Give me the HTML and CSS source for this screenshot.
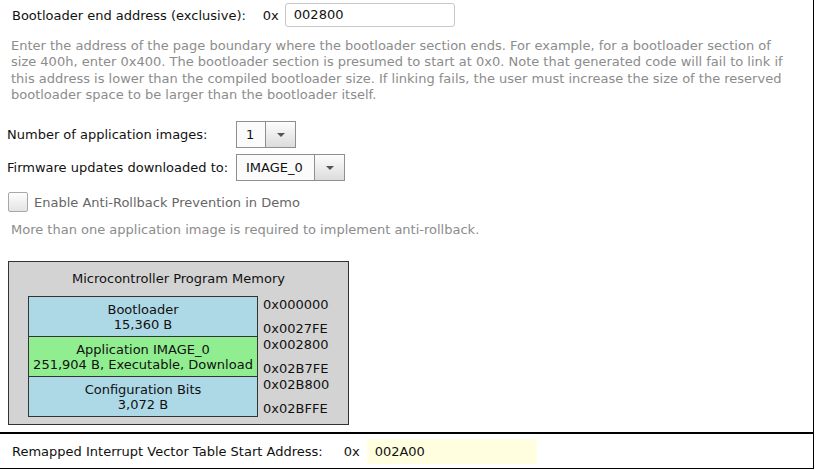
FILE: index.html
```html
<!DOCTYPE html>
<html>
<head>
<meta charset="utf-8">
<link rel="stylesheet" href="styles.css">
</head>
<body>
<div class="frame">
  <div class="main">
    <div class="row-top">
      <span class="lbl">Bootloader end address (exclusive):</span>
      <span class="hex">0x</span>
      <div class="input">002800</div>
    </div>
    <p class="desc">Enter the address of the page boundary where the bootloader section ends. For example, for a bootloader section of<br>size 400h, enter 0x400. The bootloader section is presumed to start at 0x0. Note that generated code will fail to link if<br>this address is lower than the compiled bootloader size. If linking fails, the user must increase the size of the reserved<br>bootloader space to be larger than the bootloader itself.</p>
    <div class="grid">
      <span class="lbl">Number of application images:</span>
      <div class="combo"><span class="ctext w1">1</span><span class="carrow"><i class="tri"></i></span></div>
      <span class="lbl">Firmware updates downloaded to:</span>
      <div class="combo"><span class="ctext w2">IMAGE_0</span><span class="carrow"><i class="tri"></i></span></div>
    </div>
    <div class="check"><span class="box"></span><span class="check-lbl">Enable Anti-Rollback Prevention in Demo</span></div>
    <p class="note">More than one application image is required to implement anti-rollback.</p>
    <div class="mem">
      <div class="mem-title">Microcontroller Program Memory</div>
      <div class="mem-row">
        <div class="seg blue">Bootloader<br>15,360 B</div>
        <div class="addr"><span>0x000000</span><span>0x0027FE</span></div>
      </div>
      <div class="mem-row">
        <div class="seg green">Application IMAGE_0<br>251,904 B, Executable, Download</div>
        <div class="addr"><span>0x002800</span><span>0x02B7FE</span></div>
      </div>
      <div class="mem-row">
        <div class="seg blue">Configuration Bits<br>3,072 B</div>
        <div class="addr"><span>0x02B800</span><span>0x02BFFE</span></div>
      </div>
    </div>
  </div>
  <div class="bottom">
    <span class="lbl">Remapped Interrupt Vector Table Start Address:</span>
    <span class="hex2">0x</span>
    <div class="yfield">002A00</div>
  </div>
</div>
</body>
</html>
```

FILE: styles.css
```css
body {
  margin: 0;
  font-family: "DejaVu Sans", sans-serif;
  font-size: 13px;
  color: #111;
  background: #fff;
}

.frame {
  width: 813px;
  border-right: 1px solid #000;
}

.main {
  height: 432px;
  box-sizing: border-box;
  padding-top: 3px;
  display: flex;
  flex-direction: column;
  align-items: flex-start;
}

.row-top {
  display: flex;
  align-items: center;
  height: 24px;
  padding-left: 12px;
  white-space: nowrap;
}

.hex {
  margin-left: 17px;
}

.input {
  margin-left: 6px;
  width: 170px;
  height: 24px;
  box-sizing: border-box;
  border: 1px solid #c8c8c8;
  border-radius: 3px;
  padding-left: 8px;
  line-height: 22px;
  background: #fff;
}

.desc {
  margin: 11px 0 0 11px;
  line-height: 16.33px;
  color: #8c8c8c;
  white-space: nowrap;
}

.grid {
  display: grid;
  grid-template-columns: 229px auto;
  row-gap: 6px;
  margin: 18px 0 0 7px;
  align-items: center;
  white-space: nowrap;
}

.combo {
  display: flex;
  height: 27px;
  box-sizing: border-box;
  border: 1px solid #8f8f8f;
  justify-self: start;
}

.ctext {
  box-sizing: border-box;
  background: #fbfbfb;
  padding-left: 9px;
  line-height: 25px;
  border-right: 1px solid #8f8f8f;
}

.w1 { width: 29px; }
.w2 { width: 78px; }

.carrow {
  width: 29px;
  background: linear-gradient(#fdfdfd, #dcdcdc);
  display: flex;
  align-items: center;
  justify-content: center;
}

.tri {
  width: 0;
  height: 0;
  border-left: 4px solid transparent;
  border-right: 4px solid transparent;
  border-top: 4px solid #555;
}

.check {
  display: flex;
  align-items: center;
  margin: 11px 0 0 8px;
}

.box {
  width: 20px;
  height: 20px;
  box-sizing: border-box;
  border: 1px solid #a8a8a8;
  border-radius: 2px;
  background: linear-gradient(#fdfdfd, #e4e4e4);
}

.check-lbl {
  margin-left: 6px;
  color: #666;
}

.note {
  margin: 10px 0 0 11px;
  line-height: 16px;
  color: #8c8c8c;
  white-space: nowrap;
}

.mem {
  margin: 23px 0 0 8px;
  width: 341px;
  box-sizing: border-box;
  border: 1px solid #333;
  background: #d3d3d3;
  padding: 8px 0 7px 19px;
}

.mem-title {
  width: 339px;
  margin-left: -19px;
  text-align: center;
  line-height: 17px;
  margin-bottom: 9px;
  white-space: nowrap;
}

.mem-row {
  display: flex;
  height: 41px;
}

.mem-row + .mem-row {
  margin-top: -1px;
}

.seg {
  width: 230px;
  box-sizing: border-box;
  border: 1px solid #333;
  display: flex;
  align-items: center;
  justify-content: center;
  text-align: center;
  line-height: 15px;
  white-space: nowrap;
}

.blue { background: #add8e6; }
.green { background: #90ee90; }

.addr {
  margin-left: 5px;
  display: flex;
  flex-direction: column;
  justify-content: space-between;
  line-height: 14px;
  padding-top: 2px;
  padding-bottom: 1px;
}

.bottom {
  display: flex;
  align-items: center;
  height: 34px;
  border-top: 2px solid #000;
  border-bottom: 1px solid #000;
  padding-left: 12px;
  white-space: nowrap;
}

.hex2 {
  margin-left: 21px;
}

.yfield {
  margin-left: 7px;
  width: 170px;
  height: 25px;
  box-sizing: border-box;
  background: #ffffe0;
  padding-left: 8px;
  line-height: 25px;
}
```
